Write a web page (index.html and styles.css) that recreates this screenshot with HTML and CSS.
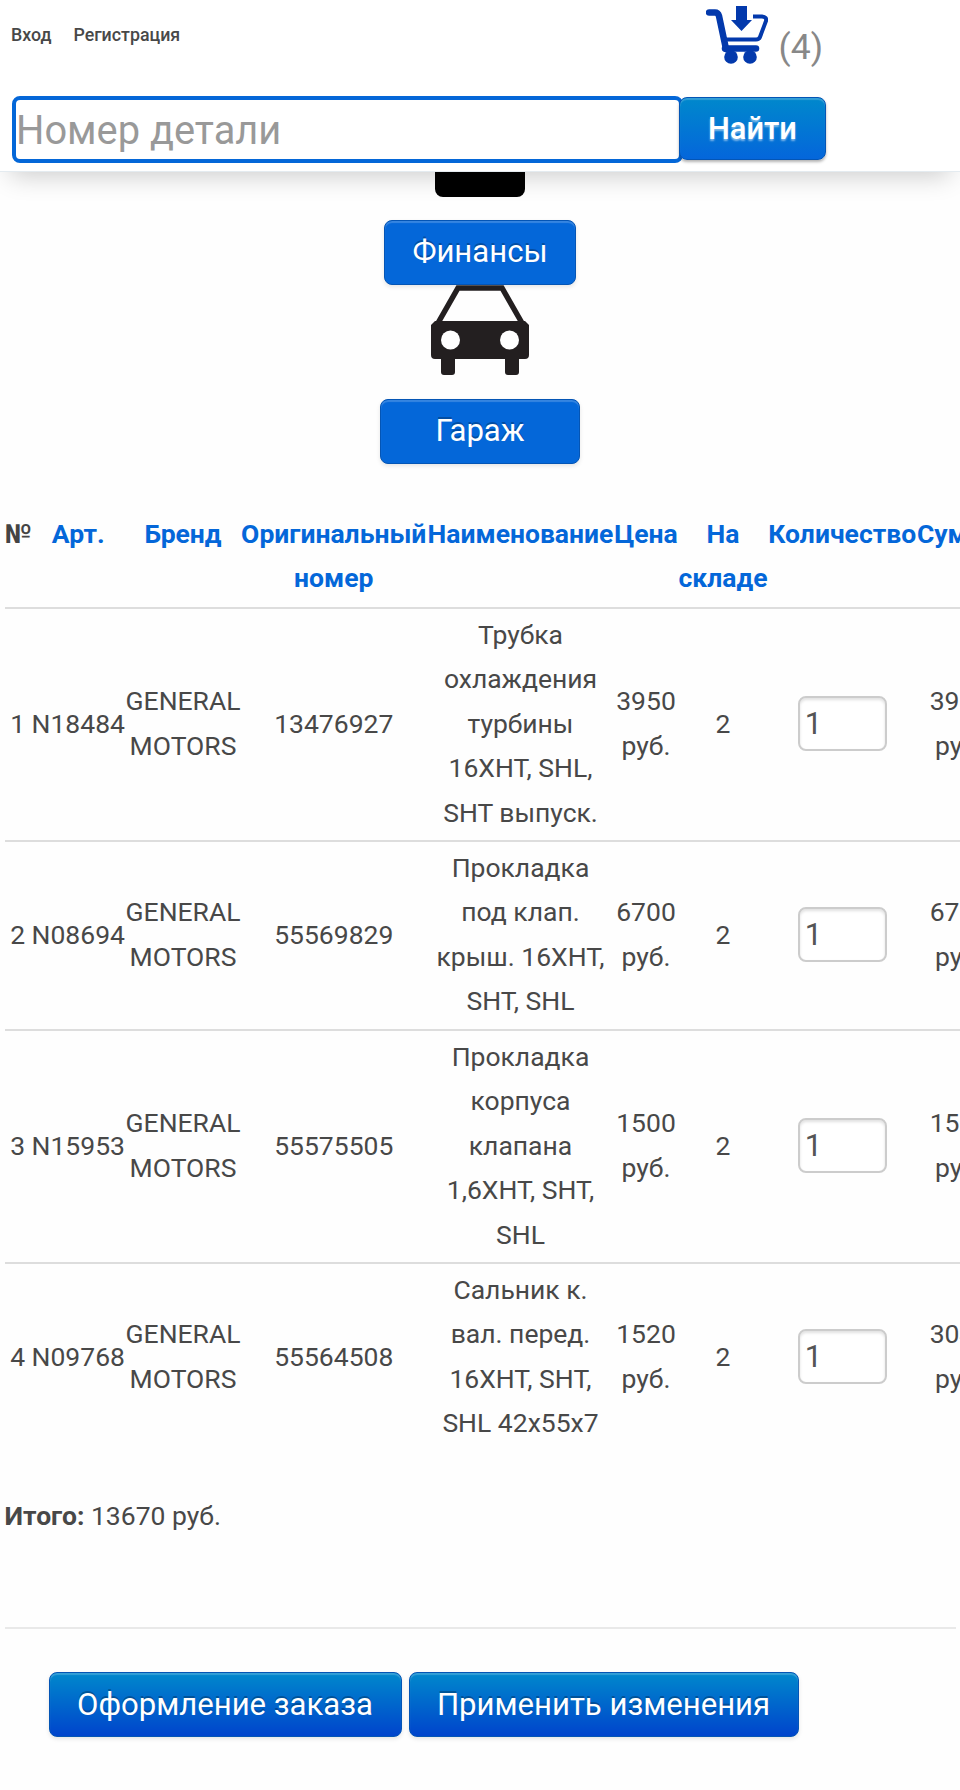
FILE: index.html
```html
<!DOCTYPE html>
<html lang="ru">
<head>
    <meta charset="UTF-8">
    <meta name="viewport" content="width=device-width, initial-scale=1.0">
    <title>Корзина</title>
    <link rel="stylesheet" href="styles.css">
</head>
<body>
    <header class="header">
        <div class="top-row">
            <nav class="login-links">
                <a href="#">Вход</a>
                <a href="#">Регистрация</a>
            </nav>
            <a class="cart" href="#">
                <svg class="cart-icon" width="62" height="58" viewBox="0 0 62 58">
                    <path d="M3 6.500H9Q12 6.500 13 10L20 43" fill="none" stroke="#0339ac" stroke-width="6.500" stroke-linecap="round" stroke-linejoin="round"/>
                    <path d="M47 10.500H56Q61 11 60 15L54 31Q53 33.500 50 33.500H18" fill="none" stroke="#0339ac" stroke-width="4"/>
                    <path d="M19 42.500H50" stroke="#0339ac" stroke-width="6.500" stroke-linecap="round"/>
                    <path d="M30 0H41V14H46L35.500 25L25 14H30Z" fill="#0339ac"/>
                    <circle cx="25" cy="51" r="6.800" fill="#0339ac"/>
                    <circle cx="44" cy="51" r="6.800" fill="#0339ac"/>
                </svg>
                <span class="cart-count">(4)</span>
            </a>
        </div>
        <form class="search">
            <input class="search-input" type="text" placeholder="Номер детали">
            <button class="btn btn-search" type="button">Найти</button>
        </form>
    </header>

    <div class="menu">
        <div class="wallet"></div>
        <a class="btn btn-finance" href="#">Финансы</a>
        <svg class="car" width="98" height="92" viewBox="0 0 98 92">
            <path d="M7 38L27 3H71L91 38" fill="none" stroke="#231f20" stroke-width="5.500"/>
            <path d="M4 36H94L98 40V70Q98 74 94 74H88V87Q88 90 85 90H77Q74 90 74 87V74H24V87Q24 90 21 90H13Q10 90 10 87V74H4Q0 74 0 70V40Z" fill="#231f20"/>
            <circle cx="19.500" cy="55" r="9.500" fill="#fff"/>
            <circle cx="78.500" cy="55" r="9.500" fill="#fff"/>
        </svg>
        <a class="btn btn-garage" href="#">Гараж</a>
    </div>

    <main class="content">
        <table class="basket">
            <colgroup>
                <col class="col-num">
                <col class="col-art">
                <col class="col-brand">
                <col class="col-orig">
                <col class="col-name">
                <col class="col-price">
                <col class="col-stock">
                <col class="col-qty">
                <col class="col-sum">
            </colgroup>
            <thead>
                <tr>
                    <th class="num">№</th>
                    <th>Арт.</th>
                    <th>Бренд</th>
                    <th>Оригинальный<br>номер</th>
                    <th>Наименование</th>
                    <th>Цена</th>
                    <th>На<br>складе</th>
                    <th>Количество</th>
                    <th>Сумма</th>
                </tr>
            </thead>
            <tbody>
                <tr>
                    <td>1</td>
                    <td>N18484</td>
                    <td>GENERAL<br>MOTORS</td>
                    <td>13476927</td>
                    <td>Трубка<br>охлаждения<br>турбины<br>16XHT, SHL,<br>SHT выпуск.</td>
                    <td>3950<br>руб.</td>
                    <td>2</td>
                    <td><input class="qty" type="text" value="1"></td>
                    <td>3950<br>руб.</td>
                </tr>
                <tr>
                    <td>2</td>
                    <td>N08694</td>
                    <td>GENERAL<br>MOTORS</td>
                    <td>55569829</td>
                    <td>Прокладка<br>под клап.<br>крыш. 16XHT,<br>SHT, SHL</td>
                    <td>6700<br>руб.</td>
                    <td>2</td>
                    <td><input class="qty" type="text" value="1"></td>
                    <td>6700<br>руб.</td>
                </tr>
                <tr>
                    <td>3</td>
                    <td>N15953</td>
                    <td>GENERAL<br>MOTORS</td>
                    <td>55575505</td>
                    <td>Прокладка<br>корпуса<br>клапана<br>1,6XHT, SHT,<br>SHL</td>
                    <td>1500<br>руб.</td>
                    <td>2</td>
                    <td><input class="qty" type="text" value="1"></td>
                    <td>1500<br>руб.</td>
                </tr>
                <tr>
                    <td>4</td>
                    <td>N09768</td>
                    <td>GENERAL<br>MOTORS</td>
                    <td>55564508</td>
                    <td>Сальник к.<br>вал. перед.<br>16XHT, SHT,<br>SHL 42x55x7</td>
                    <td>1520<br>руб.</td>
                    <td>2</td>
                    <td><input class="qty" type="text" value="1"></td>
                    <td>3040<br>руб.</td>
                </tr>
            </tbody>
        </table>
        <p class="total"><b>Итого:</b> 13670 руб.</p>
        <hr class="line">
        <div class="button-group">
            <button class="btn btn-gradient btn-order">Оформление заказа</button>
            <button class="btn btn-gradient btn-apply">Применить изменения</button>
        </div>
    </main>
</body>
</html>
```

FILE: styles.css
```css
* {
    box-sizing: border-box;
}
html, body {
    overflow: hidden;
}
body {
    margin: 0;
    height: 1790px;
    font-family: Roboto, Arial, sans-serif;
    font-size: 26.5px;
    line-height: 44.45px;
    color: #484848;
    background: #fefefe;
}
a {
    text-decoration: none;
}
.header {
    position: relative;
    height: 172px;
    background: #fff;
    border-bottom: 1px solid #e4ebf0;
    box-shadow: 0 14px 24px -10px rgba(0, 0, 0, 0.2);
}
.top-row {
    display: flex;
    justify-content: space-between;
    height: 96px;
    padding: 6px 137px 0 11px;
}
.login-links {
    display: flex;
    gap: 22px;
    padding-top: 7px;
}
.login-links a {
    font-size: 17.8px;
    font-weight: 500;
    color: #484848;
}
.cart {
    display: flex;
    gap: 11px;
    color: #888;
    font-size: 35.5px;
}
.cart-count {
    padding-top: 19px;
}
.search {
    display: flex;
    align-items: flex-start;
    padding-left: 12px;
}
.search-input {
    width: 671px;
    height: 67px;
    padding: 1px 0 0;
    border: 4px solid #0467d8;
    border-radius: 8px;
    outline: none;
    background: #fff;
    font-family: inherit;
    font-size: 39.8px;
}
.search-input::placeholder {
    color: #999;
}
.btn {
    display: flex;
    align-items: center;
    justify-content: center;
    height: 65px;
    padding: 0 0 1px;
    border: 1px solid #0455b5;
    border-radius: 8px;
    background: #0467d9;
    box-shadow: inset 0 2px 1px rgba(255, 255, 255, 0.2), 0 2px 4px rgba(0, 0, 0, 0.1);
    color: #fff;
    font-family: inherit;
    font-size: 31.1px;
    text-shadow: 0 -2px 0 rgba(0, 0, 0, 0.25);
}
.btn-search {
    position: relative;
    width: 147px;
    height: 63px;
    margin: 1px 0 0 -4px;
    background: linear-gradient(#0088cc, #0466db);
    box-shadow: inset 0 2px 1px rgba(255, 255, 255, 0.2), 0 2px 3px rgba(0, 0, 0, 0.3);
    font-weight: 500;
    font-size: 30.8px;
    text-shadow: 0 2px 2px rgba(255, 255, 255, 0.5);
}
.menu {
    display: flex;
    flex-direction: column;
    align-items: center;
    height: 339px;
}
.wallet {
    position: relative;
    width: 90px;
    height: 25px;
    margin-bottom: 23px;
    border-radius: 0 0 8px 8px;
    background: #000;
}
.btn-finance {
    width: 192px;
}
.car {
    display: block;
    margin-bottom: 22px;
}
.btn-garage {
    width: 200px;
}
.content {
    padding: 0 4.5px;
}
.basket {
    table-layout: fixed;
    width: 998px;
    border-collapse: collapse;
}
.col-num { width: 26.5px; }
.col-art { width: 94.5px; }
.col-brand { width: 115px; }
.col-orig { width: 186.5px; }
.col-name { width: 187px; }
.col-price { width: 64px; }
.col-stock { width: 90px; }
.col-qty { width: 148.5px; }
.col-sum { width: 86px; }
.basket th, .basket td {
    padding: 3.8px 0 5.2px;
    text-align: center;
    white-space: nowrap;
}
.basket th {
    vertical-align: top;
    padding: 1px 0 6px;
    color: #0467d9;
    font-weight: bold;
}
.basket .num {
    color: #444;
}
.basket tbody td {
    border-top: 2px solid #ddd;
}
.qty {
    display: block;
    width: 89px;
    height: 55px;
    margin: 0 auto;
    padding: 0 5px;
    border: 2px solid #ccc;
    border-radius: 8px;
    background: #fff;
    box-shadow: inset 0 2px 3px rgba(0, 0, 0, 0.12);
    color: #555;
    font-family: inherit;
    font-size: 31px;
}
.total {
    margin: 43px 0 89px;
}
.line {
    height: 2px;
    margin: 0;
    border: none;
    background: #e9e9e9;
}
.button-group {
    display: flex;
    gap: 7px;
    padding: 43px 0 0 44px;
}
.btn-gradient {
    background: linear-gradient(#0088cc, #0044cc);
}
.btn-order {
    width: 353px;
}
.btn-apply {
    width: 390px;
}
```
